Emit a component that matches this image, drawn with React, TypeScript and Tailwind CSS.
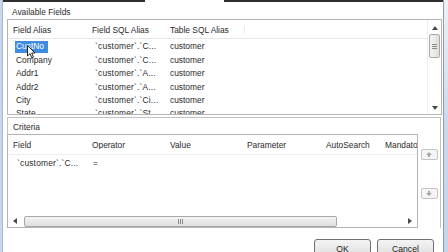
import { FC } from "react";

const fields = [
  { alias: "CustNo", sql: "`customer`.`C...", table: "customer" },
  { alias: "Company", sql: "`customer`.`C...", table: "customer" },
  { alias: "Addr1", sql: "`customer`.`A...", table: "customer" },
  { alias: "Addr2", sql: "`customer`.`A...", table: "customer" },
  { alias: "City", sql: "`customer`.`Ci...", table: "customer" },
  { alias: "State", sql: "`customer`.`St...", table: "customer" },
];

const criteriaCols = [
  { label: "Field", w: "w-[79px]" },
  { label: "Operator", w: "w-[78px]" },
  { label: "Value", w: "w-[77px]" },
  { label: "Parameter", w: "w-[79px]" },
  { label: "AutoSearch", w: "w-[59px]" },
  { label: "Mandatory", w: "flex-1" },
];

const Tri: FC<{ dir: "up" | "down" | "left" | "right" }> = ({ dir }) => {
  const pts = {
    up: "0,4 3,0 6,4",
    down: "0,0 6,0 3,4",
    left: "4,0 4,6 0,3",
    right: "0,0 0,6 4,3",
  }[dir];
  const w = dir === "up" || dir === "down" ? 6 : 4;
  const h = dir === "up" || dir === "down" ? 4 : 6;
  return (
    <svg width={w} height={h} viewBox={`0 0 ${w} ${h}`}>
      <polygon points={pts} fill="#4a4a4a" />
    </svg>
  );
};

const Grip: FC<{ vertical?: boolean }> = ({ vertical }) =>
  vertical ? (
    <div className="flex flex-col gap-[1px]">
      <div className="w-[5px] h-px bg-[#8a8a8a]" />
      <div className="w-[5px] h-px bg-[#8a8a8a]" />
      <div className="w-[5px] h-px bg-[#8a8a8a]" />
    </div>
  ) : (
    <div className="flex gap-[1px]">
      <div className="h-[5px] w-px bg-[#8a8a8a]" />
      <div className="h-[5px] w-px bg-[#8a8a8a]" />
      <div className="h-[5px] w-px bg-[#8a8a8a]" />
    </div>
  );

const SideButton: FC<{ dir: "up" | "down" }> = ({ dir }) => (
  <div className="w-[17px] h-[11px] border border-[#c4c4c4] rounded-[2px] bg-[#f5f5f5] flex items-center justify-center">
    <svg width="6" height="5" viewBox="0 0 6 5">
      {dir === "up" ? (
        <polygon points="3,0 6,3 4,3 4,5 2,5 2,3 0,3" fill="#a8a8a8" />
      ) : (
        <polygon points="3,5 6,2 4,2 4,0 2,0 2,2 0,2" fill="#a8a8a8" />
      )}
    </svg>
  </div>
);

const App: FC = () => {
  return (
    <div
      className="w-[448px] h-[252px] overflow-hidden flex bg-white text-[#2a2a2a] text-[8.4px] leading-none relative"
      style={{ fontFamily: '"Liberation Sans", Arial, sans-serif' }}
    >
      {/* left window edge */}
      <div className="w-[3px] h-full bg-[#c6d8ee] border-r border-[#a9b8c9]" />

      <div className="flex-1 flex flex-col min-w-0 overflow-hidden">
        {/* edge of window above */}
        <div className="h-[2px] flex shrink-0">
          <div className="w-[142px] bg-[#2e2e2e]" />
          <div className="w-[79px]" />
          <div className="flex-1 bg-[#2e2e2e]" />
        </div>

        <div className="h-[17px] flex items-center pl-[9px] pt-[3px] shrink-0">Available Fields</div>

        {/* available fields list */}
        <div className="ml-[4px] mr-[1px] h-[96px] border border-[#b4b4b4] flex bg-white overflow-hidden shrink-0">
          <div className="flex-1 flex flex-col min-w-0">
            <div className="h-[19px] flex items-center border-b border-[#e8e8e8] shrink-0 pt-[2px]">
              <div className="w-[79px] pl-[5px]">Field Alias</div>
              <div className="w-[78px] pl-[5px]">Field SQL Alias</div>
              <div className="w-[79px] pl-[5px]">Table SQL Alias</div>
              <div className="w-px h-[8px] bg-[#ececec]" />
            </div>
            <div className="pt-[1px] flex flex-col">
              {fields.map((f, i) => (
                <div key={f.alias} className="h-[13.4px] flex items-center shrink-0">
                  <div className="w-[79px] pl-[7px]">
                    {i === 0 ? (
                      <span className="inline-flex items-center h-[12px] pl-[1px] pr-[4px] bg-[#3e8de0] text-white">
                        {f.alias}
                      </span>
                    ) : (
                      <span className="pl-[1px]">{f.alias}</span>
                    )}
                  </div>
                  <div className="w-[78px] pl-[8px] tracking-[0.2px] whitespace-nowrap">{f.sql}</div>
                  <div className="w-[79px] pl-[5px]">{f.table}</div>
                </div>
              ))}
            </div>
          </div>
          {/* vertical scrollbar */}
          <div className="w-[14px] flex flex-col items-center border-l border-[#ededed] shrink-0">
            <div className="h-[14px] flex items-center justify-center pt-[2px]">
              <Tri dir="up" />
            </div>
            <div className="w-[11px] h-[24px] border border-[#a8a8a8] rounded-[2px] bg-gradient-to-r from-[#f4f4f4] to-[#dedede] flex items-center justify-center">
              <Grip vertical />
            </div>
            <div className="flex-1" />
            <div className="h-[13px] flex items-center justify-center">
              <Tri dir="down" />
            </div>
          </div>
        </div>

        {/* criteria */}
        <div className="mt-[2px] ml-[4px] mr-[2px] h-[17px] border-t border-x border-[#c2c2c2] flex items-center pl-[5px] pt-[3px] shrink-0">
          Criteria
        </div>
        <div className="ml-[4px] mr-[2px] flex border-r border-[#c2c2c2] shrink-0">
          <div className="w-[411px] h-[94px] border border-[#b4b4b4] flex flex-col bg-white overflow-hidden">
            <div className="h-[20px] flex items-center border-b border-[#ececec] shrink-0 whitespace-nowrap pt-[1px]">
              {criteriaCols.map((c) => (
                <div key={c.label} className={`${c.w} pl-[5px] overflow-hidden`}>
                  {c.label}
                </div>
              ))}
            </div>
            <div className="h-[16px] flex items-center shrink-0">
              <div className="w-[79px] pl-[9px] tracking-[0.2px] whitespace-nowrap">`customer`.`C...</div>
              <div className="w-[78px] pl-[6px]">=</div>
            </div>
            <div className="flex-1" />
            {/* horizontal scrollbar */}
            <div className="h-[12px] flex items-center shrink-0">
              <div className="w-[14px] flex justify-center">
                <Tri dir="left" />
              </div>
              <div className="ml-[2px] w-[313px] h-[11px] border border-[#a8a8a8] rounded-[2px] bg-gradient-to-b from-[#f4f4f4] to-[#dedede] flex items-center justify-center">
                <Grip />
              </div>
              <div className="flex-1" />
              <div className="w-[14px] flex justify-center">
                <Tri dir="right" />
              </div>
            </div>
          </div>
          <div className="flex-1 flex flex-col items-center pt-[15px] gap-[28px]">
            <SideButton dir="up" />
            <SideButton dir="down" />
          </div>
        </div>

        {/* buttons */}
        <div className="mt-[11px] flex justify-end gap-[6px] mr-[9px] shrink-0">
          <div className="w-[57px] h-[20px] border border-[#707070] rounded-[3px] bg-gradient-to-b from-[#f4f4f4] to-[#dcdcdc] flex items-start pt-[5px] justify-center text-[#222] text-[8.6px]">
            OK
          </div>
          <div className="w-[57px] h-[20px] border border-[#707070] rounded-[3px] bg-gradient-to-b from-[#f4f4f4] to-[#dcdcdc] flex items-start pt-[5px] justify-center text-[#222] text-[8.6px]">
            Cancel
          </div>
        </div>
      </div>

      {/* right window edge */}
      <div className="w-[5px] h-full border-l border-[#9c9c9c] bg-gradient-to-b from-[#eef2f7] via-[#c8d9ee] to-[#c2d5ec]" />

      {/* mouse cursor */}
      <svg className="absolute left-[27px] top-[45px]" width="9" height="14" viewBox="0 0 9 14">
        <path d="M0.5 0.5 L0.5 11 L3 8.6 L4.8 12.8 L6.4 12.1 L4.7 8 L8 8 Z" fill="white" stroke="#111" strokeWidth="0.9" strokeLinejoin="round" />
      </svg>
    </div>
  );
};

export default App;
